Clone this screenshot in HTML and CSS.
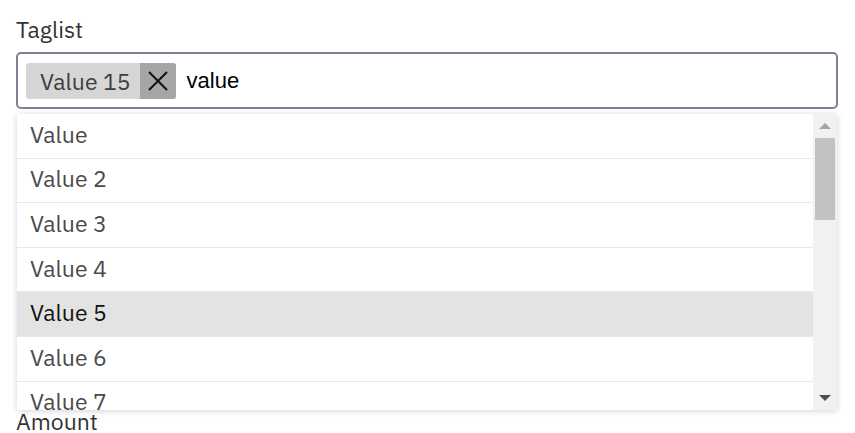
FILE: index.html
```html
<!DOCTYPE html>
<html>
<head>
<meta charset="utf-8">
<link rel="stylesheet" href="styles.css">
</head>
<body>
<div class="field">
  <label class="label">Taglist</label>
  <div class="taglist">
    <span class="tag"><span class="tag-text">Value 15</span><span class="tag-remove"><svg width="22" height="22" viewBox="0 0 22 22"><path d="M2 2 L20 20 M20 2 L2 20" stroke="#111" stroke-width="2" fill="none"/></svg></span></span>
    <span class="input-text">value</span>
  </div>
  <div class="dropdown">
    <ul class="options">
      <li class="option">Value</li>
      <li class="option">Value 2</li>
      <li class="option">Value 3</li>
      <li class="option">Value 4</li>
      <li class="option active">Value 5</li>
      <li class="option">Value 6</li>
      <li class="option">Value 7</li>
    </ul>
    <div class="scrollbar">
      <div class="arrow up"></div>
      <div class="track"><div class="thumb"></div></div>
      <div class="arrow down"></div>
    </div>
  </div>
</div>
<div class="field">
  <label class="label amount">Amount</label>
</div>
</body>
</html>
```
FILE: styles.css
```css
html, body { margin: 0; padding: 0; background: #fff; }
body {
  padding: 14px 17px 0 16px;
  font-family: "IBM Plex Sans", "Noto Sans", sans-serif;
  color: #3b3b3b;
  height: 433px;
  box-sizing: border-box;
  overflow: hidden;
}
.label {
  display: block;
  font-size: 23px;
  line-height: 30px;
  color: #333;
  margin-bottom: 8px;
}
.label.amount { line-height: 24px; margin: -1px 0 0 0; }
.taglist {
  height: 57px;
  box-sizing: border-box;
  border: 2px solid #7e8193;
  border-radius: 5px;
  display: flex;
  align-items: center;
  padding: 0 8px;
  gap: 11px;
}
.tag {
  display: flex;
  height: 36px;
  border-radius: 3px;
  overflow: hidden;
  background: #d6d6d6;
}
.tag-text {
  padding: 0 9px 0 14px;
  font-size: 23px;
  line-height: 36px;
  color: #3d3d3d;
}
.tag-remove {
  width: 36px;
  background: #a6a6a6;
  display: flex;
  align-items: center;
  justify-content: center;
}
.input-text {
  font-family: "Liberation Sans", Arial, sans-serif;
  font-size: 22px;
  color: #000;
}
.dropdown {
  margin: 5px 1px 0 1px;
  height: 296px;
  display: flex;
  background: #fff;
  box-shadow: 0 1px 6px rgba(0,0,0,0.18);
  border-radius: 3px;
  overflow: hidden;
}
.options {
  list-style: none;
  margin: 0;
  padding: 0;
  flex: 1;
  overflow: hidden;
}
.option {
  height: 44.6px;
  box-sizing: border-box;
  border-bottom: 1px solid #e8e8e8;
  padding-left: 13px;
  padding-bottom: 4px;
  display: flex;
  align-items: center;
  font-size: 23px;
  color: #4a4a4a;
}
.option.active { background: #e3e3e3; color: #111; }
.scrollbar {
  width: 24px;
  background: #f0f1f1;
  display: flex;
  flex-direction: column;
  align-items: center;
}
.arrow { height: 24px; width: 24px; display: flex; align-items: center; justify-content: center; }
.arrow.up::before {
  content: "";
  border-left: 6px solid transparent;
  border-right: 6px solid transparent;
  border-bottom: 6px solid #a3a3a3;
}
.arrow.down::before {
  content: "";
  border-left: 6px solid transparent;
  border-right: 6px solid transparent;
  border-top: 6px solid #505050;
}
.track { flex: 1; width: 100%; display: flex; justify-content: center; }
.thumb { width: 20px; height: 82px; background: #c1c1c1; }
```
